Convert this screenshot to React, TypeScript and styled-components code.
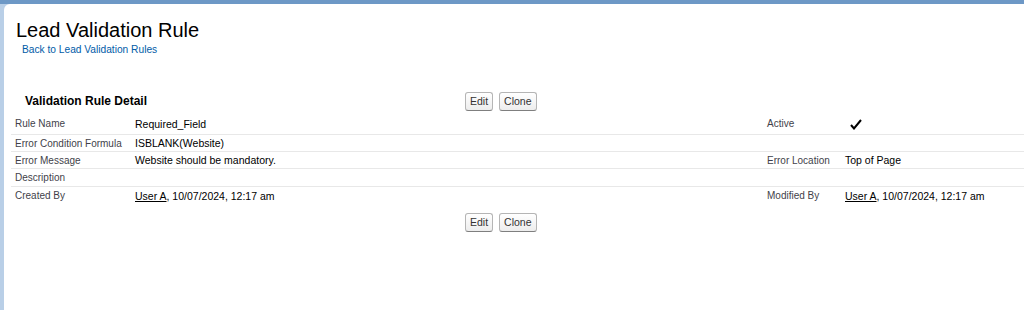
import React from "react";
import styled, { createGlobalStyle } from "styled-components";

const GlobalStyle = createGlobalStyle`
  html, body {
    margin: 0;
    padding: 0;
    background: #b9cfe7;
    font-family: Arial, "Liberation Sans", sans-serif;
  }
`;

const Frame = styled.div`
  height: 310px;
  box-sizing: border-box;
  background: linear-gradient(#6d98c6 0, #6d98c6 4px, #b9cfe7 4px);
  padding: 4px 0 0 4px;
  overflow: hidden;
`;

const Panel = styled.div`
  background: #fff;
  height: 100%;
  border-top-left-radius: 6px;
  padding: 14px 0 0 0;
  box-sizing: border-box;
`;

const Title = styled.h1`
  margin: 0 0 0 12px;
  font-size: 20px;
  font-weight: normal;
  color: #000;
  line-height: 24px;
`;

const BackLink = styled.a`
  display: block;
  margin: 2px 0 0 18px;
  font-size: 10.2px;
  color: #015ba7;
  text-decoration: none;
`;

const Block = styled.div`
  margin-top: 36px;
  padding-left: 7px;
`;

const ButtonRow = styled.div<{ $top?: boolean }>`
  display: grid;
  grid-template-columns: 454px 1fr;
  align-items: center;
  height: 20px;
  margin-top: ${(p) => (p.$top ? "0" : "8px")};
`;

const SectionTitle = styled.h2`
  margin: 0 0 0 14px;
  font-size: 12px;
  font-weight: bold;
  color: #000;
`;

const Buttons = styled.div`
  display: flex;
  gap: 6px;
`;

const Button = styled.button`
  font-family: Arial, "Liberation Sans", sans-serif;
  font-size: 10.5px;
  color: #333;
  height: 19px;
  padding: 0 4px;
  background: linear-gradient(#fff, #ededed);
  border: 1px solid #b5b5b5;
  border-bottom-color: #7f7f7f;
  border-radius: 3px;
  line-height: 17px;
`;

const Table = styled.div`
  margin-top: 2px;
`;

const Row = styled.div<{ $last?: boolean }>`
  display: grid;
  grid-template-columns: 120px 632px 78px 1fr;
  align-items: center;
  height: 16px;
  border-bottom: ${(p) => (p.$last ? "none" : "1px solid #e8e8e8")};
  padding-left: 4px;
  &:first-child {
    height: 21px;
  }
  &:nth-child(4),
  &:last-child {
    height: 17px;
  }
`;

const Label = styled.div`
  font-size: 10px;
  color: #3f3f4a;
  white-space: nowrap;
`;

const Data = styled.div`
  font-size: 10.5px;
  color: #000;
  white-space: nowrap;
`;

const User = styled.a`
  color: #000;
  text-decoration: underline;
`;

const Check = () => (
  <svg width="12" height="11" viewBox="0 0 12 11" style={{ marginLeft: 5, marginTop: 3 }}>
    <path d="M1 6 L4 9.5 L11 1" fill="none" stroke="#000" strokeWidth="2" />
  </svg>
);

export default function App() {
  return (
    <>
      <GlobalStyle />
      <Frame>
        <Panel>
          <Title>Lead Validation Rule</Title>
          <BackLink href="#">Back to Lead Validation Rules</BackLink>
          <Block>
            <ButtonRow $top>
              <SectionTitle>Validation Rule Detail</SectionTitle>
              <Buttons>
                <Button>Edit</Button>
                <Button>Clone</Button>
              </Buttons>
            </ButtonRow>
            <Table>
              <Row>
                <Label>Rule Name</Label>
                <Data>Required_Field</Data>
                <Label>Active</Label>
                <Data>
                  <Check />
                </Data>
              </Row>
              <Row>
                <Label>Error Condition Formula</Label>
                <Data>ISBLANK(Website)</Data>
                <Label />
                <Data />
              </Row>
              <Row>
                <Label>Error Message</Label>
                <Data>Website should be mandatory.</Data>
                <Label>Error Location</Label>
                <Data>Top of Page</Data>
              </Row>
              <Row>
                <Label>Description</Label>
                <Data />
                <Label />
                <Data />
              </Row>
              <Row $last>
                <Label>Created By</Label>
                <Data>
                  <User href="#">User A</User>, 10/07/2024, 12:17 am
                </Data>
                <Label>Modified By</Label>
                <Data>
                  <User href="#">User A</User>, 10/07/2024, 12:17 am
                </Data>
              </Row>
            </Table>
            <ButtonRow>
              <div />
              <Buttons>
                <Button>Edit</Button>
                <Button>Clone</Button>
              </Buttons>
            </ButtonRow>
          </Block>
        </Panel>
      </Frame>
    </>
  );
}
